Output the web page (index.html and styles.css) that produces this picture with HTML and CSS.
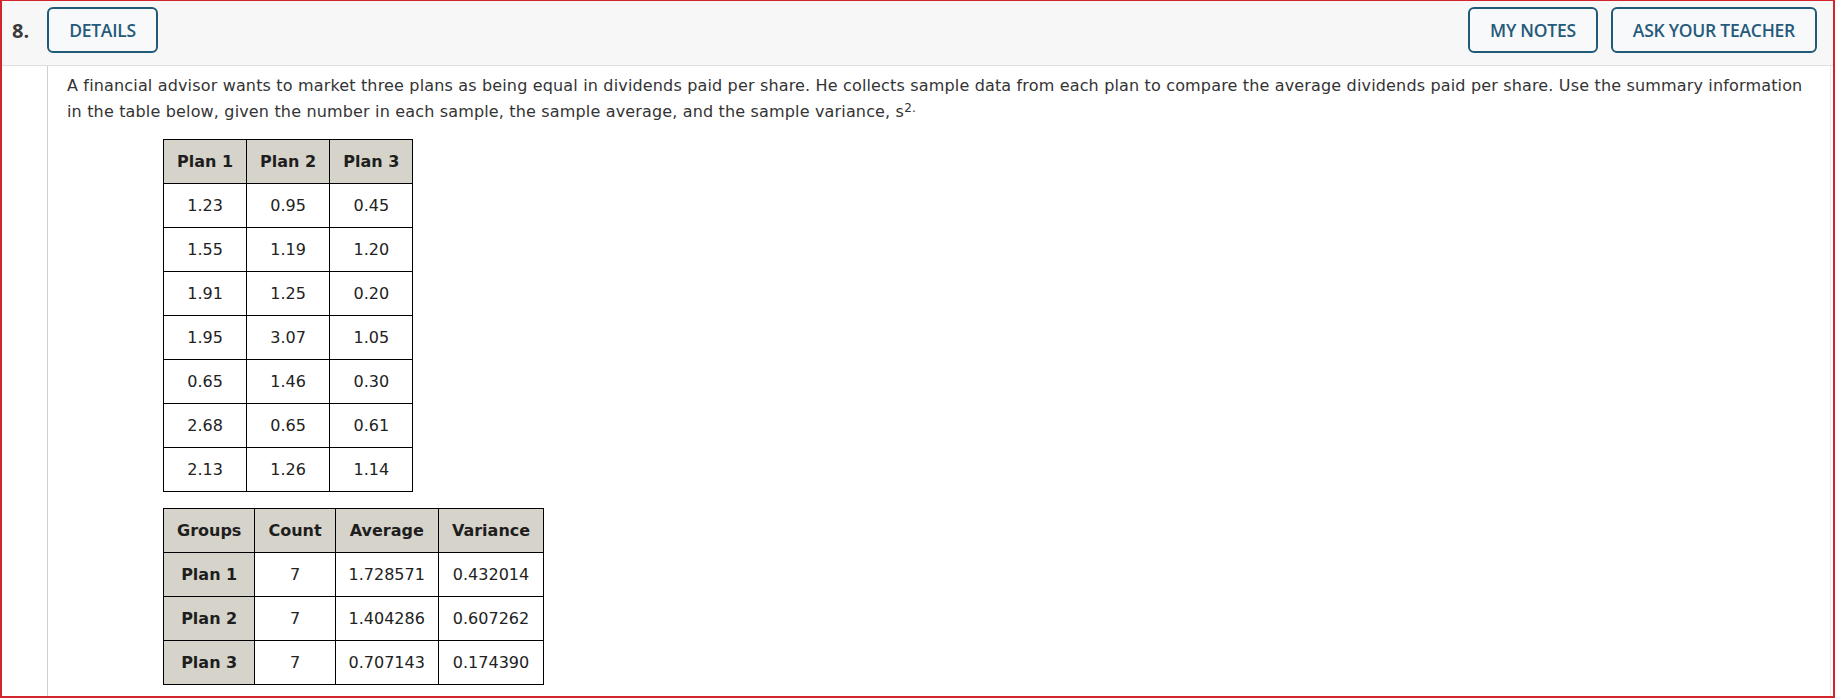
FILE: index.html
```html
<!DOCTYPE html>
<html lang="en">
<head>
<meta charset="utf-8">
<title>Question 8</title>
<link rel="stylesheet" href="styles.css">
</head>
<body>
<div class="frame">
  <div class="header">
    <div class="left-group">
      <span class="qnum">8.</span>
      <button class="btn">DETAILS</button>
    </div>
    <div class="right-group">
      <button class="btn">MY NOTES</button>
      <button class="btn">ASK YOUR TEACHER</button>
    </div>
  </div>
  <div class="main">
    <div class="gutter"></div>
    <div class="content">
      <p class="question">A financial advisor wants to market three plans as being equal in dividends paid per share. He collects sample data from each plan to compare the average dividends paid per share. Use the summary information in the table below, given the number in each sample, the sample average, and the sample variance, s<sup>2.</sup></p>
      <table class="data data-first">
        <tr><th>Plan 1</th><th>Plan 2</th><th>Plan 3</th></tr>
        <tr><td>1.23</td><td>0.95</td><td>0.45</td></tr>
        <tr><td>1.55</td><td>1.19</td><td>1.20</td></tr>
        <tr><td>1.91</td><td>1.25</td><td>0.20</td></tr>
        <tr><td>1.95</td><td>3.07</td><td>1.05</td></tr>
        <tr><td>0.65</td><td>1.46</td><td>0.30</td></tr>
        <tr><td>2.68</td><td>0.65</td><td>0.61</td></tr>
        <tr><td>2.13</td><td>1.26</td><td>1.14</td></tr>
      </table>
      <table class="data data-second">
        <tr><th>Groups</th><th>Count</th><th>Average</th><th>Variance</th></tr>
        <tr><th>Plan 1</th><td>7</td><td>1.728571</td><td>0.432014</td></tr>
        <tr><th>Plan 2</th><td>7</td><td>1.404286</td><td>0.607262</td></tr>
        <tr><th>Plan 3</th><td>7</td><td>0.707143</td><td>0.174390</td></tr>
      </table>
    </div>
  </div>
</div>
</body>
</html>
```

FILE: styles.css
```css
html, body {
  margin: 0;
  padding: 0;
  background: #ffffff;
}

body {
  font-family: "DejaVu Sans", Verdana, sans-serif;
  color: #333333;
}

.frame {
  box-sizing: border-box;
  height: 698px;
  border: 2px solid #d3242b;
  border-top-width: 1px;
  overflow: hidden;
  display: flex;
  flex-direction: column;
  background: #ffffff;
}

.header {
  box-sizing: border-box;
  height: 65px;
  flex: 0 0 auto;
  display: flex;
  align-items: center;
  justify-content: space-between;
  padding: 0 16px 6px 10px;
  background: #f7f7f7;
  border-bottom: 1px solid #dedede;
}

.left-group,
.right-group {
  display: flex;
  align-items: center;
}

.left-group {
  gap: 18px;
}

.right-group {
  gap: 13px;
}

.qnum {
  font-family: "Open Sans", "Liberation Sans", sans-serif;
  font-weight: 700;
  font-size: 20px;
  color: #3a3a3a;
}

.btn {
  box-sizing: border-box;
  height: 46px;
  padding: 0 20px;
  border: 2px solid #1f5b78;
  border-radius: 6px;
  background: #f8f9fa;
  color: #255a7a;
  font-family: "Open Sans", "Liberation Sans", sans-serif;
  font-weight: 600;
  font-size: 17.5px;
  letter-spacing: -0.25px;
  cursor: pointer;
}

.main {
  flex: 1 1 auto;
  display: flex;
}

.gutter {
  width: 45px;
  flex: 0 0 auto;
  border-right: 1px solid #cfcfcf;
}

.content {
  flex: 1 1 auto;
  padding: 7px 16px 0 19px;
  margin-right: 2px;
  border-right: 1px solid #ececec;
}

.question {
  margin: 0;
  font-size: 16px;
  line-height: 26px;
  letter-spacing: 0.16px;
  color: #333333;
}

.question sup {
  font-size: 12px;
  line-height: 1;
  vertical-align: 5px;
}

.data {
  border-collapse: collapse;
  margin-left: 96px;
  font-size: 16px;
  color: #222222;
}

.data-first {
  margin-top: 14px;
}

.data-second {
  margin-top: 16px;
}

.data th,
.data td {
  border: 1px solid #000000;
  padding: 12px 13px;
  line-height: 19px;
  text-align: center;
}

.data th {
  background: #d6d3ca;
  font-weight: 700;
  color: #1e1e1e;
}

.data td {
  background: #ffffff;
  font-weight: 400;
}
```
